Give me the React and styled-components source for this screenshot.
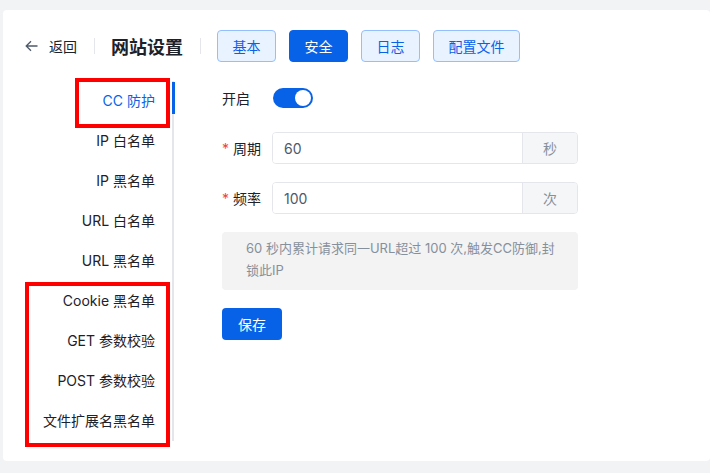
import React from 'react';
import styled, { createGlobalStyle } from 'styled-components';

const GlobalStyle = createGlobalStyle`
	html, body {
		margin: 0;
		padding: 0;
		background: #f2f3f5;
		font-family: Inter, "Noto Sans CJK SC", sans-serif;
		font-size: 14px;
		color: #1d2129;
	}
`;

const primary = '#0862e8';

const Card = styled.div`
	margin: 10px 0 0 3px;
	height: 451px;
	background: #fff;
	border-radius: 4px;
	padding-top: 20px;
	box-sizing: border-box;
`;

const Header = styled.div`
	display: flex;
	align-items: center;
	height: 32px;
	padding-left: 22px;
	margin-bottom: 19px;
`;

const Back = styled.div`
	display: flex;
	align-items: center;
	gap: 11px;
	color: #1d2129;
	font-size: 14px;
	cursor: pointer;
`;

const Divider = styled.div`
	width: 1px;
	height: 16px;
	background: #e5e6eb;
	margin: 0 16px 0 17px;
`;

const Title = styled.h1`
	margin: 0;
	font-size: 18px;
	font-weight: 700;
	color: #1d2129;
`;

const Tabs = styled.div`
	display: flex;
	gap: 13px;
`;

const TabButton = styled.button`
	height: 32px;
	padding: 0 14.5px;
	border-radius: 4px;
	font-family: inherit;
	font-size: 14px;
	border: 1px solid ${p => (p.$active ? primary : '#94bfff')};
	background: ${p => (p.$active ? primary : '#e8f3ff')};
	color: ${p => (p.$active ? '#fff' : primary)};
	cursor: pointer;
`;

const Body = styled.div`
	display: flex;
	align-items: flex-start;
`;

const Menu = styled.div`
	position: relative;
	width: 169px;
	border-right: 2px solid #e5e6eb;
`;

const MenuItem = styled.div`
	position: relative;
	height: 40px;
	line-height: 40px;
	text-align: right;
	padding-right: 17px;
	font-size: 14px;
	color: ${p => (p.$active ? primary : '#1d2129')};

	${p =>
		p.$active &&
		`
		&::after {
			content: '';
			position: absolute;
			right: -3px;
			top: 1px;
			width: 3px;
			height: 32px;
			background: ${primary};
		}
	`}
`;

const Annotation = styled.div`
	position: absolute;
	border: 4px solid #ff0000;
	box-sizing: border-box;
	pointer-events: none;
	left: ${p => p.$left}px;
	top: ${p => p.$top}px;
	width: ${p => p.$width}px;
	height: ${p => p.$height}px;
`;

const Form = styled.div`
	margin-left: 48px;
	margin-top: 1px;
	display: flex;
	flex-direction: column;
	gap: 18px;
	width: 356px;
`;

const Row = styled.div`
	display: flex;
	align-items: center;
	height: 32px;
`;

const Label = styled.label`
	width: 50px;
	flex-shrink: 0;
	color: #1d2129;
	font-size: 14px;
	box-sizing: border-box;
`;

const Star = styled.span`
	color: #f53f3f;
	margin-right: 4px;
`;

const Switch = styled.div`
	margin-left: 1px;
	width: 40px;
	height: 20px;
	border-radius: 10px;
	background: ${primary};
	display: flex;
	align-items: center;
	justify-content: flex-end;
	padding: 0 2px;
	box-sizing: border-box;

	&::after {
		content: '';
		width: 16px;
		height: 16px;
		border-radius: 50%;
		background: #fff;
	}
`;

const InputGroup = styled.div`
	display: flex;
	flex: 1;
	height: 32px;
	border: 1px solid #e5e6eb;
	border-radius: 4px;
	overflow: hidden;
	box-sizing: border-box;
`;

const Input = styled.input`
	flex: 1;
	min-width: 0;
	border: none;
	outline: none;
	padding: 0 11px;
	font-family: inherit;
	font-size: 14px;
	color: #4e5969;
`;

const Suffix = styled.div`
	width: 54px;
	display: flex;
	align-items: center;
	justify-content: center;
	background: #f5f6f8;
	border-left: 1px solid #e5e6eb;
	color: #86909c;
	font-size: 14px;
`;

const Tip = styled.div`
	background: #f3f3f3;
	border-radius: 4px;
	padding: 5px 12px 9px 24px;
	color: #86909c;
	font-size: 13px;
	line-height: 22px;
	white-space: nowrap;
`;

const SaveButton = styled.button`
	align-self: flex-start;
	height: 32px;
	padding: 0 16px;
	border: none;
	border-radius: 4px;
	background: ${primary};
	color: #fff;
	font-family: inherit;
	font-size: 14px;
	cursor: pointer;
`;

const menuItems = [
	'CC 防护',
	'IP 白名单',
	'IP 黑名单',
	'URL 白名单',
	'URL 黑名单',
	'Cookie 黑名单',
	'GET 参数校验',
	'POST 参数校验',
	'文件扩展名黑名单',
];

const tabs = ['基本', '安全', '日志', '配置文件'];

export default function App() {
	return (
		<>
			<GlobalStyle />
			<Card>
				<Header>
					<Back>
						<svg width="13" height="12" viewBox="0 0 13 12" fill="none" stroke="#4e5969" strokeWidth="1.3">
							<path d="M12.5 6H1.2M6 1.2L1.2 6 6 10.8" />
						</svg>
						返回
					</Back>
					<Divider />
					<Title>网站设置</Title>
					<Divider />
					<Tabs>
						{tabs.map(t => (
							<TabButton key={t} $active={t === '安全'}>
								{t}
							</TabButton>
						))}
					</Tabs>
				</Header>
				<Body>
					<Menu>
						{menuItems.map((m, i) => (
							<MenuItem key={m} $active={i === 0}>
								{m}
							</MenuItem>
						))}
						<Annotation $left={72} $top={-3} $width={95} $height={50} />
						<Annotation $left={22} $top={201} $width={145} $height={165} />
					</Menu>
					<Form>
						<Row>
							<Label>开启</Label>
							<Switch />
						</Row>
						<Row>
							<Label>
								<Star>*</Star>周期
							</Label>
							<InputGroup>
								<Input defaultValue="60" />
								<Suffix>秒</Suffix>
							</InputGroup>
						</Row>
						<Row>
							<Label>
								<Star>*</Star>频率
							</Label>
							<InputGroup>
								<Input defaultValue="100" />
								<Suffix>次</Suffix>
							</InputGroup>
						</Row>
						<Tip>
							60 秒内累计请求同一URL超过 100 次,触发CC防御,封
							<br />
							锁此IP
						</Tip>
						<SaveButton>保存</SaveButton>
					</Form>
				</Body>
			</Card>
		</>
	);
}
